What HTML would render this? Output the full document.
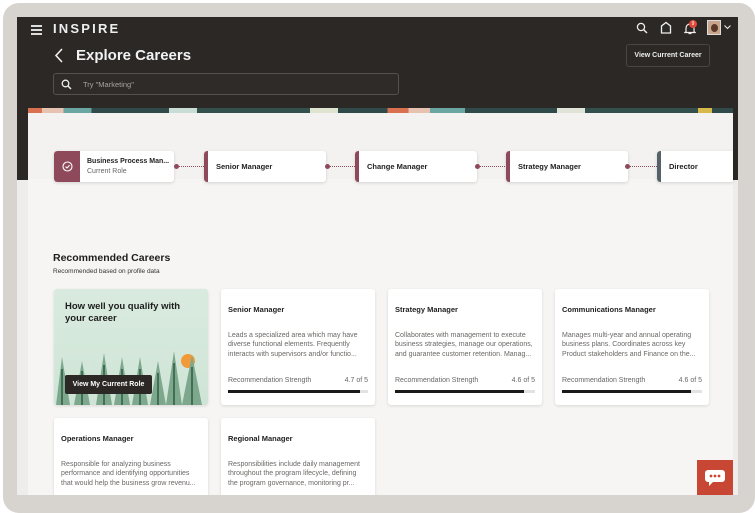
<!DOCTYPE html>
<html><head><style>
*{box-sizing:border-box;margin:0;padding:0}
body{width:755px;height:499px;overflow:hidden;background:#fff;font-family:"Liberation Sans",sans-serif;position:relative}
.frame{position:absolute;left:3px;top:3px;width:752px;height:510px;background:#d7d3ce;border-radius:16px}
.screen{position:absolute;left:17px;top:17px;width:721px;height:478px;background:#efedeb;overflow:hidden}
.dark{position:absolute;left:0;top:0;width:721px;height:163px;background:#2b2826}
.abs{position:absolute}
.panel{position:absolute;left:11px;top:96px;width:705px;height:400px;background:#f6f5f3}
.strip{position:absolute;left:11px;top:91px;width:705px;height:5px;background:linear-gradient(90deg,#d9704f 0 2%,#e8c2b0 2% 5%,#6aa7a2 5% 9%,#2f4a48 9% 20%,#c9dcd6 20% 24%,#34504c 24% 40%,#dfe4d0 40% 44%,#2f4a48 44% 51%,#d9704f 51% 54%,#e8c2b0 54% 57%,#6aa7a2 57% 62%,#2f4a48 62% 75%,#dfe4d6 75% 79%,#34504c 79% 95%,#d8b84a 95% 97%,#2f4a48 97%)}
.node{position:absolute;top:134px;height:31px;background:#fff;border-radius:3px;box-shadow:0 1px 3px rgba(0,0,0,.15);font-size:7.5px;font-weight:bold;color:#222;display:flex;align-items:center;white-space:nowrap;overflow:hidden}
.node .bar{width:4px;height:100%;background:#8e4a5b;border-radius:3px 0 0 3px;margin-right:8px;flex:none}
.conn{position:absolute;top:149px;width:30px;height:1px;border-top:1.5px dotted #8e4a5b}
.conn:before{content:"";position:absolute;left:-2px;top:-3.5px;width:5px;height:5px;border-radius:50%;background:#8e4a5b}
.card{position:absolute;width:154px;height:116px;background:#fff;border-radius:3px;box-shadow:0 1px 3px rgba(0,0,0,.12);padding:16px 7px 0 7px}
.card h4{font-size:7.5px;color:#222;margin-bottom:17px}
.card p{font-size:7px;color:#6b6865;line-height:9.3px}
.rs{position:absolute;left:7px;right:7px;top:88px;font-size:7px;color:#666;display:flex;justify-content:space-between}
.pb{position:absolute;left:7px;right:7px;top:101px;height:3px;background:#e4e2e0}
.pb i{display:block;height:3px;background:#1c1a19}
</style></head><body>
<div class="frame"></div>
<div class="screen">
<div class="dark"></div>
<div class="abs" style="left:14px;top:8px;width:11px;">
<div style="height:1.5px;background:#ddd;margin-bottom:2.5px"></div><div style="height:1.5px;background:#ddd;margin-bottom:2.5px"></div><div style="height:1.5px;background:#ddd"></div></div>
<div class="abs" style="left:36px;top:4px;color:#eee;font-weight:bold;font-size:13px;letter-spacing:2.2px">INSPIRE</div>
<svg class="abs" style="left:619px;top:5px" width="12" height="12" viewBox="0 0 12 12"><circle cx="5" cy="5" r="3.6" fill="none" stroke="#eee" stroke-width="1.3"/><path d="M7.7 7.7L11 11" stroke="#eee" stroke-width="1.4"/></svg>
<svg class="abs" style="left:643px;top:4px" width="12" height="13" viewBox="0 0 12 13"><path d="M1.5 12V5L6 1.5 10.5 5V12Z" fill="none" stroke="#eee" stroke-width="1.3"/></svg>
<svg class="abs" style="left:667px;top:5px" width="12" height="13" viewBox="0 0 12 13"><path d="M2 9.5V6a4 4 0 018 0v3.5l1 1H1z M4.5 11.5h3" fill="none" stroke="#eee" stroke-width="1.2"/></svg>
<div class="abs" style="left:672px;top:3px;width:8px;height:8px;border-radius:50%;background:#e0483a;color:#fff;font-size:5px;text-align:center;line-height:8px">9</div>
<div class="abs" style="left:690px;top:3px;width:14px;height:15px;background:#c9a58e;border:1px solid #ddd"><div style="margin:3px auto 0;width:7px;height:8px;border-radius:50%;background:#5a3a2a"></div></div>
<svg class="abs" style="left:707px;top:8px" width="7" height="5"><path d="M.5 .5L3.5 3.5 6.5 .5" fill="none" stroke="#eee" stroke-width="1.1"/></svg>
<svg class="abs" style="left:38px;top:31px" width="8" height="15"><path d="M7 1L1 7.5 7 14" fill="none" stroke="#eee" stroke-width="1.6"/></svg>
<div class="abs" style="left:59px;top:30px;color:#f2f2f2;font-weight:bold;font-size:15px">Explore Careers</div>
<div class="abs" style="left:609px;top:27px;width:84px;height:23px;border:1px solid #4a4643;border-radius:3px;color:#eee;font-size:7px;font-weight:bold;text-align:center;line-height:21px">View Current Career</div>
<div class="abs" style="left:36px;top:56px;width:346px;height:22px;border:1px solid #55514d;border-radius:3px;background:#2e2b29"></div>
<svg class="abs" style="left:44px;top:62px" width="11" height="11"><circle cx="4.5" cy="4.5" r="3.3" fill="none" stroke="#eee" stroke-width="1.3"/><path d="M7 7L10 10" stroke="#eee" stroke-width="1.4"/></svg>
<div class="abs" style="left:66px;top:63px;color:#a7a39f;font-size:7.5px">Try "Marketing"</div>
<div class="strip"></div>
<div class="panel"></div>
<div class="abs" style="left:11px;top:96px;width:705px;height:66px;background:#f3f2f0"></div>
<div class="node" style="left:37px;width:120px"><div style="width:26px;height:31px;background:#8e4a5b;border-radius:3px 0 0 3px;display:flex;align-items:center;justify-content:center;margin-right:7px;flex:none"><svg width="11" height="11"><circle cx="5.5" cy="5.5" r="4.5" fill="none" stroke="#fff" stroke-width="1.1"/><path d="M3.5 5.6L5 7 7.6 4.2" fill="none" stroke="#fff" stroke-width="1.1"/></svg></div><div style="font-size:7px"><div>Business Process Man...</div><div style="font-weight:normal;color:#666;margin-top:3px">Current Role</div></div></div>
<div class="conn" style="left:159px"></div>
<div class="node" style="left:187px;width:122px"><div class="bar"></div>Senior Manager</div>
<div class="conn" style="left:310px"></div>
<div class="node" style="left:338px;width:122px"><div class="bar"></div>Change Manager</div>
<div class="conn" style="left:460px"></div>
<div class="node" style="left:489px;width:122px"><div class="bar"></div>Strategy Manager</div>
<div class="conn" style="left:610px"></div>
<div class="node" style="left:640px;width:76px;border-radius:3px 0 0 3px"><div class="bar" style="background:#55626a"></div>Director</div>
<div class="abs" style="left:36px;top:235px;font-size:10.5px;font-weight:bold;color:#1f1d1c">Recommended Careers</div>
<div class="abs" style="left:36px;top:251px;font-size:6.5px;color:#333">Recommended based on profile data</div>
<div class="card" style="left:37px;top:272px;background:linear-gradient(#d9ebdf,#cfe4d6);padding:12px 11px;overflow:hidden">
<div style="font-size:9.5px;font-weight:bold;color:#1d1d1d;line-height:12px">How well you qualify with<br>your career</div>
<svg class="abs" style="left:0;top:50px" width="154" height="66" viewBox="0 0 154 66">
<circle cx="134" cy="22" r="7" fill="#f09a3a"/>
<g fill="#7ea88e"><path d="M2 66L8 18 16 66z"/><path d="M20 66L28 22 36 66z"/><path d="M42 66L50 14 58 66z"/><path d="M60 66L68 18 76 66z"/><path d="M78 66L86 18 94 66z"/><path d="M96 66L104 22 112 66z"/><path d="M112 66L120 12 128 66z"/><path d="M128 66L138 16 148 66z"/></g>
<g stroke="#2e5a44" stroke-width="1.5"><path d="M8 30V66M28 32V66M50 26V66M68 30V66M86 30V66M104 34V66M120 24V66M138 28V66"/></g>
</svg>
<div class="abs" style="left:11px;top:86px;width:87px;height:19px;background:#2b2826;border-radius:2px;color:#fff;font-size:7px;font-weight:bold;text-align:center;line-height:19px">View My Current Role</div>
</div>
<div class="card" style="left:204px;top:272px"><h4>Senior Manager</h4><p>Leads a specialized area which may have diverse functional elements. Frequently interacts with supervisors and/or functio...</p><div class="rs"><span>Recommendation Strength</span><span>4.7 of 5</span></div><div class="pb"><i style="width:94%"></i></div></div>
<div class="card" style="left:371px;top:272px"><h4>Strategy Manager</h4><p>Collaborates with management to execute business strategies, manage our operations, and guarantee customer retention. Manag...</p><div class="rs"><span>Recommendation Strength</span><span>4.6 of 5</span></div><div class="pb"><i style="width:92%"></i></div></div>
<div class="card" style="left:538px;top:272px"><h4>Communications Manager</h4><p>Manages multi-year and annual operating business plans. Coordinates across key Product stakeholders and Finance on the...</p><div class="rs"><span>Recommendation Strength</span><span>4.6 of 5</span></div><div class="pb"><i style="width:92%"></i></div></div>
<div class="card" style="left:37px;top:401px"><h4>Operations Manager</h4><p>Responsible for analyzing business performance and identifying opportunities that would help the business grow revenu...</p></div>
<div class="card" style="left:204px;top:401px"><h4>Regional Manager</h4><p>Responsibilities include daily management throughout the program lifecycle, defining the program governance, monitoring pr...</p></div>
<div class="abs" style="left:680px;top:443px;width:36px;height:35px;background:#c74634"><svg style="margin:9px 0 0 7px" width="22" height="18" viewBox="0 0 22 18"><path d="M4 1h14a3 3 0 013 3v6a3 3 0 01-3 3H9l-4 4v-4H4a3 3 0 01-3-3V4a3 3 0 013-3z" fill="#fff"/><circle cx="7" cy="7" r="1.4" fill="#c74634"/><circle cx="11" cy="7" r="1.4" fill="#c74634"/><circle cx="15" cy="7" r="1.4" fill="#c74634"/></svg></div>
</div>
</body></html>
